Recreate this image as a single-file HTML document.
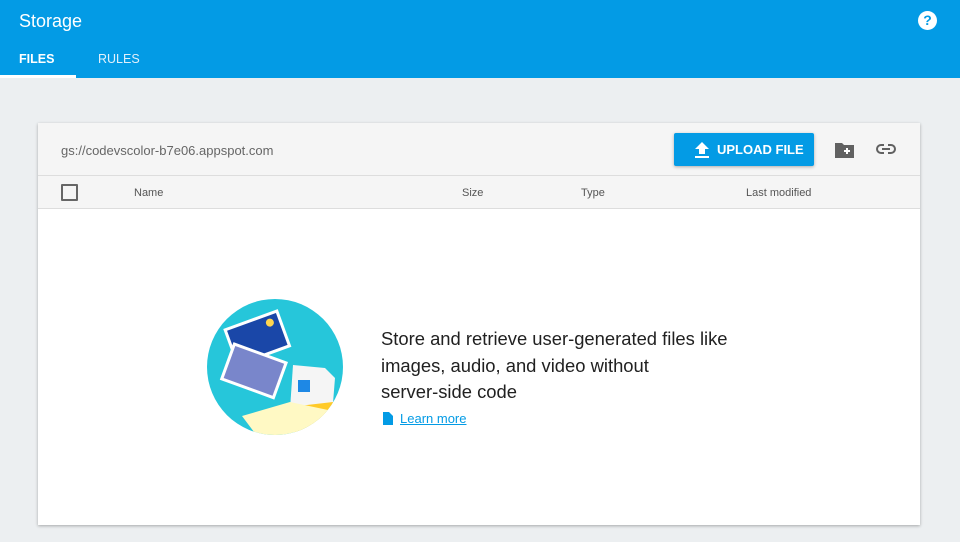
<!DOCTYPE html>
<html><head><style>
body{margin:0;width:960px;height:542px;background:#eceff1;font-family:"Liberation Sans",sans-serif;overflow:hidden;position:relative}
.hdr{position:absolute;left:0;top:0;width:960px;height:78px;background:#039be5;color:#fff}
.t{position:absolute;left:19px;top:11px;font-size:18px}
.tab{position:absolute;top:52px;font-size:12.5px;font-weight:bold}
.ul{position:absolute;left:0;top:75px;width:76px;height:3px;background:#fff}
.help{position:absolute;left:918px;top:11px;width:19px;height:19px;border-radius:50%;background:#fff;color:#039be5;font-weight:bold;font-size:14px;text-align:center;line-height:19px}
.card{position:absolute;left:38px;top:123px;width:882px;height:402px;background:#fff;box-shadow:0 1px 3px rgba(0,0,0,.3)}
.top{position:absolute;left:0;top:0;width:882px;height:52px;background:#f5f5f5;border-bottom:1px solid #ddd}
.row{position:absolute;left:0;top:53px;width:882px;height:32px;background:#f5f5f5;border-bottom:1px solid #ddd;font-size:11px;color:#555}
.row span{position:absolute;top:11px}
.btn{position:absolute;left:636px;top:10px;width:140px;height:33px;background:#039be5;border-radius:2px;box-shadow:0 1px 3px rgba(0,0,0,.3);color:#fff;font-size:13px;line-height:33px}
</style></head><body>
<div class="hdr"><div class="t">Storage</div>
<div class="tab" style="left:19px">FILES</div><div class="tab" style="left:98px;color:#e1f0fb;font-weight:normal">RULES</div>
<div class="ul"></div><div class="help">?</div></div>
<div class="card">
<div class="top"><div style="position:absolute;left:23px;top:20px;font-size:13px;color:#666">gs://codevscolor-b7e06.appspot.com</div>
<div class="btn"><svg style="position:absolute;left:21px;top:9px" width="14" height="16" viewBox="0 0 14 16"><path d="M7 0L0 7h4v5h6V7h4z M0 14h14v2H0z" fill="#fff"/></svg><span style="position:absolute;left:43px;font-weight:bold">UPLOAD FILE</span></div>
<svg style="position:absolute;left:797px;top:19px" width="19" height="16" viewBox="0 0 19 16"><path d="M0 1h7l2 2h10v13H0z" fill="#616161"/><path d="M9 9h6M12 6v6" stroke="#fff" stroke-width="2"/></svg>
<svg style="position:absolute;left:838px;top:21px" width="20" height="10" viewBox="0 0 20 10"><path d="M8 1H5a4 4 0 0 0 0 8h3M12 1h3a4 4 0 0 1 0 8h-3M6 5h8" fill="none" stroke="#616161" stroke-width="2"/></svg>
</div>
<div class="row"><div style="position:absolute;left:23px;top:8px;width:13px;height:13px;border:2px solid #666;border-radius:1px"></div>
<span style="left:96px">Name</span><span style="left:424px">Size</span><span style="left:543px">Type</span><span style="left:708px">Last modified</span></div>
<svg style="position:absolute;left:168px;top:175px" width="140" height="140" viewBox="0 0 140 140">
<defs><clipPath id="c"><circle cx="69" cy="69" r="68"/></clipPath></defs>
<circle cx="69" cy="69" r="68" fill="#26c6da"/>
<g clip-path="url(#c)">
<g transform="rotate(-20 45 40)"><rect x="22" y="22" width="58" height="40" fill="#fff"/><rect x="25" y="25" width="52" height="34" fill="#1a47a8"/><circle cx="68" cy="32" r="4" fill="#ffd54f"/></g>
<g transform="rotate(20 45 75)"><rect x="18" y="52" width="58" height="40" fill="#fff"/><rect x="21" y="55" width="52" height="34" fill="#7986cb"/></g>
<path d="M87 67l32 3 10 10-4 50-42-4z" fill="#f5f5f5"/><rect x="92" y="82" width="12" height="12" fill="#1e88e5"/>
<path d="M75 110l52-6 6 30h-55z" fill="#ffca28"/>
<path d="M36 118l48-14 38 8-8 30h-60z" fill="#fff9c4"/>
</g>
</svg>
<div style="position:absolute;left:343px;top:203px;font-size:18.4px;line-height:26.5px;color:#212121">Store and retrieve user-generated files like<br>images, audio, and video without<br>server-side code</div>
<svg style="position:absolute;left:345px;top:289px" width="10" height="13" viewBox="0 0 10 13"><path d="M0 0h6l4 4v9H0z" fill="#039be5"/></svg>
<div style="position:absolute;left:362px;top:288px;font-size:13px;color:#039be5;text-decoration:underline">Learn more</div>
</div>
</body></html>
